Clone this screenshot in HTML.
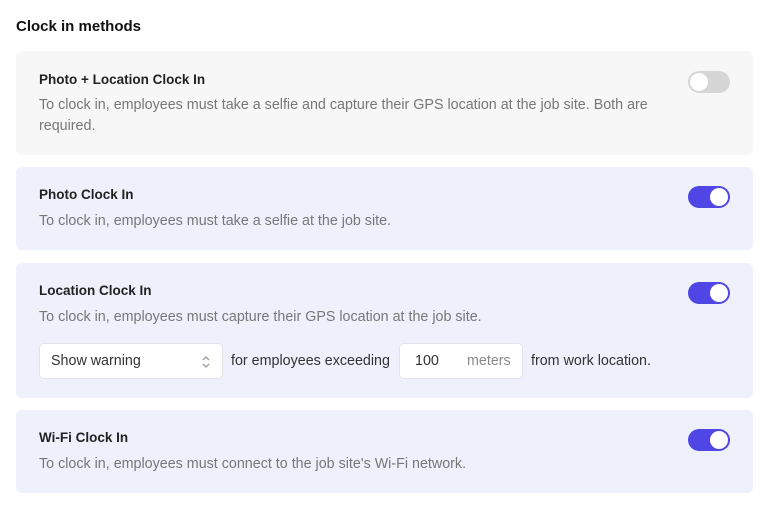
<!DOCTYPE html>
<html><head><style>
body{margin:0;background:#fff;font-family:"Liberation Sans",sans-serif;width:768px;height:520px;position:relative;overflow:hidden}
h1{position:absolute;left:16px;top:18px;margin:0;font-size:15px;font-weight:700;color:#111}
.card{position:absolute;left:16px;width:737px;border-radius:6px;background:#eef1fc}
.card.off{background:#f7f7f7}
.t{position:absolute;left:23px;font-size:13.5px;font-weight:600;color:#222}
.d{position:absolute;left:23px;font-size:14.3px;color:#777;line-height:21px;width:615px}
.tg{position:absolute;left:672px;width:42px;height:22px;border-radius:11px;background:#4f46e5}
.tg::after{content:"";position:absolute;right:2px;top:2px;width:18px;height:18px;border-radius:50%;background:#fff}
.off .tg{background:#d6d6d6}
.off .tg::after{right:auto;left:2px}
.box{position:absolute;top:80px;height:36px;background:#fff;border:1px solid #e2e4ea;border-radius:5px;box-sizing:border-box;font-size:14.3px;color:#333;line-height:34px}
.lbl{position:absolute;top:80px;line-height:36px;font-size:14.3px;color:#333}
</style></head><body>
<h1>Clock in methods</h1>
<div class="card off" style="top:51px;height:104px">
<div class="t" style="top:21px">Photo + Location Clock In</div>
<div class="d" style="top:44px">To clock in, employees must take a selfie and capture their GPS location at the job site. Both are required.</div>
<div class="tg" style="top:20px"></div></div>
<div class="card" style="top:167px;height:83px">
<div class="t" style="top:20px">Photo Clock In</div>
<div class="d" style="top:44px">To clock in, employees must take a selfie at the job site.</div>
<div class="tg" style="top:19px"></div></div>
<div class="card" style="top:263px;height:135px">
<div class="t" style="top:20px">Location Clock In</div>
<div class="d" style="top:44px">To clock in, employees must capture their GPS location at the job site.</div>
<div class="tg" style="top:19px"></div>
<div class="box" style="left:23px;width:184px;padding-left:11px">Show warning<svg style="position:absolute;right:11px;top:11px" width="10" height="14" viewBox="0 0 10 14"><path d="M2 5 L5 2 L8 5 M2 9 L5 12 L8 9" fill="none" stroke="#999" stroke-width="1.3"/></svg></div>
<div class="lbl" style="left:215px">for employees exceeding</div>
<div class="box" style="left:383px;width:124px;padding-left:15px">100<span style="position:absolute;left:67px;color:#888">meters</span></div>
<div class="lbl" style="left:515px">from work location.</div>
</div>
<div class="card" style="top:410px;height:83px">
<div class="t" style="top:20px">Wi-Fi Clock In</div>
<div class="d" style="top:44px">To clock in, employees must connect to the job site's Wi-Fi network.</div>
<div class="tg" style="top:19px"></div></div>
</body></html>
